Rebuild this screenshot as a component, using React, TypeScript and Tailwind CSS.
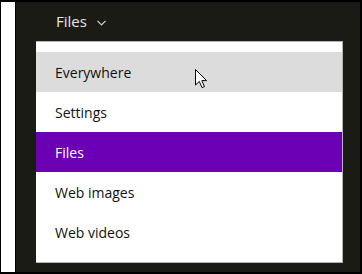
const items = ["Everywhere", "Settings", "Files", "Web images", "Web videos"];

const Cursor = () => (
  <svg className="absolute left-[159px] top-[27px]" width="13" height="20" viewBox="0 0 13 20">
    <path d="M0.5 0.5 L0.5 16 L4.3 12.4 L7 18.6 L9.4 17.6 L6.8 11.6 L11.6 11.6 Z" fill="#fff" stroke="#000" strokeWidth="1" strokeLinejoin="miter" />
  </svg>
);

const App = () => {
  const hovered = 0;
  const selected = 2;

  return (
    <div className="w-[362px] h-[274px] bg-black flex pt-[2px] pb-[2px] pr-[2px] pl-[1px]" style={{ fontFamily: '"Open Sans", "Noto Sans", sans-serif' }}>
      <div className="w-[14px] h-full bg-white" />
      <div className="w-[1px] h-full bg-black" />
      <div className="flex-1 h-full bg-[#1b1b15] flex flex-col pl-[20px] pr-[17px]">
        <div className="h-[39px] flex items-center pl-[20px] gap-[10px] text-[#e6e6e6] text-[15px]">
          <span>Files</span>
          <svg width="9" height="6" viewBox="0 0 9 6" className="mt-[3px]">
            <path d="M0.5 0.8 L4.5 4.8 L8.5 0.8" fill="none" stroke="#d0d0d0" strokeWidth="1.2" />
          </svg>
        </div>
        <div className="relative bg-white border border-l-0 border-[#b5b5b5] py-[10px]">
          {items.map((label, i) => (
            <div
              key={label}
              className={
                "h-[40px] flex items-center pl-[19px] text-[14px] " +
                (i === selected
                  ? "bg-[#6b00b4] text-white"
                  : i === hovered
                  ? "bg-[#dcdcdc] text-[#111]"
                  : "text-[#111]")
              }
            >
              {label}
            </div>
          ))}
          <Cursor />
        </div>
      </div>
    </div>
  );
};

export default App;
